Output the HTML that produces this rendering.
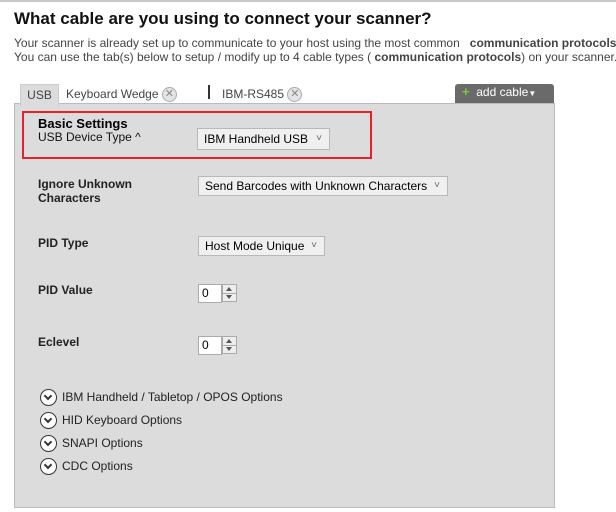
<!DOCTYPE html>
<html><head><style>
body{margin:0;width:616px;height:512px;background:#fff;font-family:"Liberation Sans",Arial,sans-serif;position:relative;overflow:hidden;color:#000}
.a{position:absolute;white-space:nowrap}
.sel{position:absolute;background:#f0f0f0;border:1px solid #b8b8b8;font-size:12px;line-height:18px;padding-left:6px;box-sizing:border-box}
.sel:after{content:"˅";position:absolute;right:7px;top:0;font-size:10px;color:#666}
.num{position:absolute;width:24px;height:19px;background:#fff;border:1px solid #aaa;box-sizing:border-box;font-size:12px;line-height:17px;padding-left:3px}
.sp{position:absolute;width:15px;height:18px;border:1px solid #aaa;box-sizing:border-box;background:#eee}
.sp:before{content:"";position:absolute;left:3px;top:2px;border:3px solid transparent;border-bottom:4px solid #555;border-top:0}
.sp:after{content:"";position:absolute;left:3px;bottom:2px;border:3px solid transparent;border-top:4px solid #555;border-bottom:0}
.sp i{position:absolute;left:0;right:0;top:8px;border-top:1px solid #aaa}
.lbl{font-size:12px;font-weight:bold;color:#222}
.opt{position:absolute;left:40px;font-size:12px;color:#222;line-height:18px}
.opt b{display:inline-block;width:15px;height:15px;border:1.5px solid #333;border-radius:50%;vertical-align:middle;margin-right:5px;position:relative;background:#fff}
.opt b:after{content:"";position:absolute;left:4px;top:2.5px;width:4px;height:4px;border-right:2px solid #333;border-bottom:2px solid #333;transform:rotate(45deg)}
.x{display:inline-block;width:13px;height:13px;border-radius:50%;border:1px solid #aaa;background:#e4e4e4;color:#888;font-size:11px;line-height:13px;text-align:center;vertical-align:middle}
</style></head><body>
<div class="a" style="left:0;top:0;width:616px;height:2px;background:#c8c8c8"></div>
<div class="a" style="left:14px;top:9px;font-size:17px;font-weight:bold;color:#111">What cable are you using to connect your scanner?</div>
<div class="a" style="left:14px;top:36px;font-size:12px;color:#444;line-height:14px">Your scanner is already set up to communicate to your host using the most common &nbsp;&nbsp;<b>communication protocols</b><br>You can use the tab(s) below to setup / modify up to 4 cable types ( <b>communication protocols</b>) on your scanner.</div>
<div class="a" style="left:14px;top:103px;width:539px;height:403px;background:#dcdcdc;border:1px solid #bbb"></div>
<div class="a" style="left:20px;top:84px;width:37px;height:21px;background:#dcdcdc;border:1px solid #ccc;border-bottom:0;font-size:12px;color:#444;line-height:21px;text-align:center">USB</div>
<div class="a" style="left:66px;top:87px;font-size:12px;color:#444">Keyboard Wedge <span class="x">✕</span></div>
<div class="a" style="left:208px;top:85px;width:2px;height:14px;background:#333"></div>
<div class="a" style="left:222px;top:87px;font-size:12px;color:#444">IBM-RS485 <span class="x">✕</span></div>
<div class="a" style="left:455px;top:84px;width:99px;height:19px;background:#6a6a6a;border-radius:3px 3px 0 0;color:#fff;font-size:12px;line-height:16px"><span style="color:#7c4;font-weight:bold;margin-left:7px;font-size:13px">+</span>&nbsp; add cable<span style="font-size:8px">▼</span></div>
<div class="a" style="left:22px;top:111px;width:346px;height:44px;border:2px solid #e8202a"></div>
<div class="a" style="left:38px;top:116px;font-size:13px;font-weight:bold">Basic Settings</div>
<div class="a lbl" style="left:38px;top:130px;font-weight:normal;color:#111">USB Device Type ^</div>
<div class="sel" style="left:197px;top:128px;width:133px;height:22px;line-height:20px">IBM Handheld USB</div>
<div class="a lbl" style="left:38px;top:177px;line-height:14px">Ignore Unknown<br>Characters</div>
<div class="sel" style="left:198px;top:176px;width:250px;height:20px">Send Barcodes with Unknown Characters</div>
<div class="a lbl" style="left:38px;top:236px">PID Type</div>
<div class="sel" style="left:198px;top:236px;width:127px;height:20px">Host Mode Unique</div>
<div class="a lbl" style="left:38px;top:283px">PID Value</div>
<div class="num" style="left:198px;top:284px">0</div><div class="sp" style="left:222px;top:284px"><i></i></div>
<div class="a lbl" style="left:38px;top:335px">Eclevel</div>
<div class="num" style="left:198px;top:336px">0</div><div class="sp" style="left:222px;top:336px"><i></i></div>
<div class="opt" style="top:388px"><b></b>IBM Handheld / Tabletop / OPOS Options</div>
<div class="opt" style="top:411px"><b></b>HID Keyboard Options</div>
<div class="opt" style="top:434px"><b></b>SNAPI Options</div>
<div class="opt" style="top:457px"><b></b>CDC Options</div>
</body></html>
